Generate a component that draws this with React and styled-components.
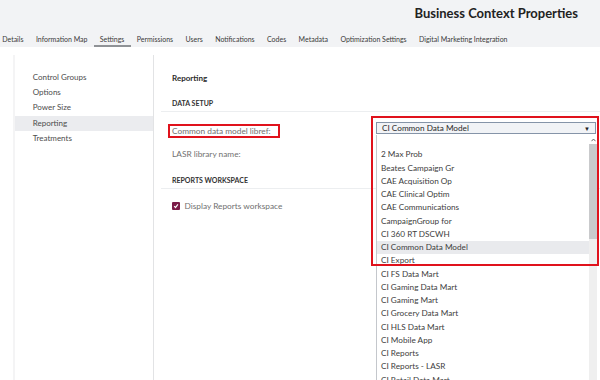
import styled, { createGlobalStyle } from 'styled-components';

const GlobalStyle = createGlobalStyle`
  html, body {
    margin: 0;
    padding: 0;
    background: #ffffff;
    font-family: Lato, "Open Sans", "Liberation Sans", sans-serif;
    overflow: hidden;
  }
  * { box-sizing: border-box; }
`;

const tabs = [
  'Details',
  'Information Map',
  'Settings',
  'Permissions',
  'Users',
  'Notifications',
  'Codes',
  'Metadata',
  'Optimization Settings',
  'Digital Marketing Integration',
];

const navItems = ['Control Groups', 'Options', 'Power Size', 'Reporting', 'Treatments'];

const options = [
  '',
  '2 Max Prob',
  'Beates Campaign Gr',
  'CAE Acquisition Op',
  'CAE Clinical Optim',
  'CAE Communications',
  'CampaignGroup for',
  'CI 360 RT DSCWH',
  'CI Common Data Model',
  'CI Export',
  'CI FS Data Mart',
  'CI Gaming Data Mart',
  'CI Gaming Mart',
  'CI Grocery Data Mart',
  'CI HLS Data Mart',
  'CI Mobile App',
  'CI Reports',
  'CI Reports - LASR',
  'CI Retail Data Mart',
];

const Page = styled.div`
  width: 600px;
  height: 380px;
  display: flex;
  flex-direction: column;
  overflow: hidden;
`;

const Header = styled.header`
  height: 47px;
  flex-shrink: 0;
  background: #f2f3f5;
  display: flex;
  flex-direction: column;
  justify-content: space-between;
`;

const Title = styled.h1`
  margin: 0;
  padding: 6px 22px 0 0;
  text-align: right;
  font-size: 13px;
  line-height: 15px;
  font-weight: 700;
  color: #222;
`;

const TabBar = styled.nav`
  display: flex;
  align-items: flex-end;
  margin-left: -4px;
`;

const Tab = styled.div`
  padding: 0 6.2px 1px;
  font-size: 7px;
  line-height: 10px;
  color: #3a3a3a;
  white-space: nowrap;
  border-bottom: 2px solid ${(p) => (p.$active ? '#8f9296' : 'transparent')};
`;

const Body = styled.div`
  flex: 1;
  display: flex;
  min-height: 0;
`;

const Sidebar = styled.aside`
  width: 141px;
  flex-shrink: 0;
  margin: 8px 0 0 13px;
  padding-top: 14.7px;
  border-left: 2px solid #f4f4f5;
  border-right: 1px solid #e2e3e5;
`;

const NavItem = styled.div`
  height: 15.3px;
  line-height: 15.3px;
  padding-left: 17.7px;
  font-size: 8px;
  color: #4d4d4d;
  background: ${(p) => (p.$active ? '#ebecef' : 'transparent')};
`;

const Main = styled.main`
  flex: 1;
  min-width: 0;
  padding: 25px 0 0 7px;
`;

const PageTitle = styled.h2`
  margin: 0;
  padding-left: 11px;
  font-size: 8px;
  line-height: 12px;
  font-weight: 700;
  color: #2b2b2b;
`;

const SectionHeader = styled.h3`
  margin: ${(p) => p.$top}px 0 0;
  padding: 0 0 3.5px 11px;
  font-size: 7px;
  line-height: 10px;
  font-weight: 700;
  color: #333;
  border-bottom: 1px solid #eceef0;
`;

const FormRow = styled.div`
  display: flex;
  align-items: center;
  height: 14px;
  margin-top: ${(p) => p.$top}px;
  padding-left: 11px;
`;

const LabelCell = styled.div`
  width: 204px;
  flex-shrink: 0;
`;

const Label = styled.span`
  display: inline-block;
  font-size: 8.3px;
  line-height: 10px;
  color: #707070;
  white-space: nowrap;
  ${(p) =>
    p.$marked &&
    `
    margin-left: -4px;
    padding: 0 7px 0 2px;
    border: 2px solid #e0121c;
  `}
`;

const SelectWrap = styled.div`
  position: relative;
  width: 220px;
`;

const Select = styled.div`
  height: 12px;
  display: flex;
  align-items: center;
  justify-content: space-between;
  padding: 0 5px;
  background: #f1f3f6;
  border: 1px solid #8594a8;
  font-size: 8.2px;
  color: #2a2a2a;
`;

const Caret = styled.span`
  font-size: 6px;
  color: #222;
`;

const ListBox = styled.div`
  position: absolute;
  top: 13px;
  left: 0;
  width: 222px;
  height: 260px;
  display: flex;
  background: #fff;
  border-left: 1px solid #c4c7cc;
  z-index: 2;
`;

const Options = styled.div`
  flex: 1;
`;

const Option = styled.div`
  height: 13.25px;
  line-height: 13.25px;
  padding-left: 4px;
  font-size: 8.2px;
  color: #404040;
  white-space: nowrap;
  background: ${(p) => (p.$selected ? '#e9eaed' : 'transparent')};
`;

const ScrollTrack = styled.div`
  width: 8px;
  margin-right: 1px;
  display: flex;
  flex-direction: column;
  background: #efefef;
`;

const ScrollArrow = styled.div`
  height: 9px;
  background: #fff;
  display: flex;
  align-items: center;
  justify-content: center;
`;

const ScrollThumb = styled.div`
  height: 95px;
  background: #c9cacc;
`;

const Marker = styled.div`
  position: absolute;
  left: -5px;
  top: -6px;
  width: 228px;
  height: 150px;
  border: 2px solid #e0121c;
  z-index: 3;
  pointer-events: none;
`;

const CheckRow = styled.label`
  display: flex;
  align-items: center;
  gap: 5px;
  height: 14px;
  margin-top: 10px;
  padding-left: 11px;
  font-size: 8.3px;
  color: #707070;
`;

const CheckBox = styled.span`
  width: 7.5px;
  height: 7.5px;
  display: flex;
  align-items: center;
  justify-content: center;
  background: #7b1c48;
  border-radius: 1px;
`;

function App() {
  return (
    <Page>
      <GlobalStyle />
      <Header>
        <Title>Business Context Properties</Title>
        <TabBar>
          {tabs.map((t) => (
            <Tab key={t} $active={t === 'Settings'}>
              {t}
            </Tab>
          ))}
        </TabBar>
      </Header>

      <Body>
        <Sidebar>
          {navItems.map((n) => (
            <NavItem key={n} $active={n === 'Reporting'}>
              {n}
            </NavItem>
          ))}
        </Sidebar>

        <Main>
          <PageTitle>Reporting</PageTitle>
          <SectionHeader $top={13.5}>DATA SETUP</SectionHeader>

          <FormRow $top={9}>
            <LabelCell>
              <Label $marked>Common data model libref:</Label>
            </LabelCell>
            <SelectWrap>
              <Select>
                CI Common Data Model
                <Caret>▼</Caret>
              </Select>
              <ListBox>
                <Options>
                  {options.map((o, i) => (
                    <Option key={i} $selected={o === 'CI Common Data Model'}>
                      {o}
                    </Option>
                  ))}
                </Options>
                <ScrollTrack>
                  <ScrollArrow>
                    <svg width="5" height="4" viewBox="0 0 5 4">
                      <path d="M0.5 3.2 L2.5 1 L4.5 3.2" fill="none" stroke="#555" strokeWidth="0.9" />
                    </svg>
                  </ScrollArrow>
                  <ScrollThumb />
                </ScrollTrack>
              </ListBox>
              <Marker />
            </SelectWrap>
          </FormRow>

          <FormRow $top={8.5}>
            <LabelCell>
              <Label>LASR library name:</Label>
            </LabelCell>
          </FormRow>

          <SectionHeader $top={17}>REPORTS WORKSPACE</SectionHeader>

          <CheckRow>
            <CheckBox>
              <svg width="6" height="6" viewBox="0 0 6 6">
                <path d="M1.2 3.2 L2.5 4.5 L4.9 1.4" fill="none" stroke="#fff" strokeWidth="1.2" />
              </svg>
            </CheckBox>
            Display Reports workspace
          </CheckRow>
        </Main>
      </Body>
    </Page>
  );
}

export default App;
